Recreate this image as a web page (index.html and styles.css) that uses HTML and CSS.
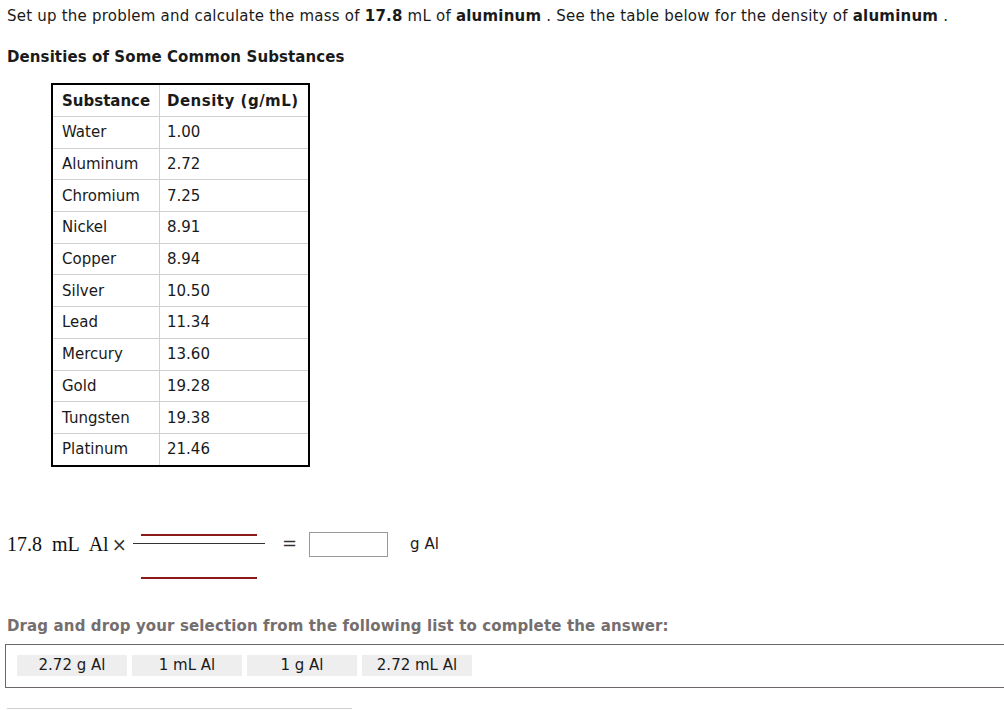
FILE: index.html
```html
<!DOCTYPE html>
<html>
<head>
<meta charset="utf-8">
<link rel="stylesheet" href="styles.css">
</head>
<body>
<p class="prompt">Set up the problem and calculate the mass of <b>17.8</b> mL of <b>aluminum</b> . See the table below for the density of <b>aluminum</b> .</p>
<h2 class="caption">Densities of Some Common Substances</h2>
<table class="dens">
  <thead><tr><th>Substance</th><th>Density (g/mL)</th></tr></thead>
  <tbody>
    <tr><td>Water</td><td>1.00</td></tr>
    <tr><td>Aluminum</td><td>2.72</td></tr>
    <tr><td>Chromium</td><td>7.25</td></tr>
    <tr><td>Nickel</td><td>8.91</td></tr>
    <tr><td>Copper</td><td>8.94</td></tr>
    <tr><td>Silver</td><td>10.50</td></tr>
    <tr><td>Lead</td><td>11.34</td></tr>
    <tr><td>Mercury</td><td>13.60</td></tr>
    <tr><td>Gold</td><td>19.28</td></tr>
    <tr><td>Tungsten</td><td>19.38</td></tr>
    <tr><td>Platinum</td><td>21.46</td></tr>
  </tbody>
</table>
<div class="equation">
  <span class="math">17.8&nbsp; mL&nbsp; Al<span class="times">×</span></span>
  <div class="fraction">
    <div class="slot"></div>
    <div class="bar"></div>
    <div class="slot bottom"></div>
  </div>
  <span class="equals">=</span>
  <div class="answer"></div>
  <span class="unit">g Al</span>
</div>
<p class="instr">Drag and drop your selection from the following list to complete the answer:</p>
<div class="pool">
  <span class="chip">2.72 g Al</span>
  <span class="chip">1 mL Al</span>
  <span class="chip">1 g Al</span>
  <span class="chip">2.72 mL Al</span>
</div>
<div class="foot"></div>
</body>
</html>
```
FILE: styles.css
```css
html, body {
  margin: 0;
  padding: 0;
  background: #fff;
}
body {
  font-family: "DejaVu Sans", Verdana, sans-serif;
  font-size: 15px;
  color: #1a1a1a;
  padding: 0 0 0 7px;
  overflow: hidden;
}
.prompt {
  margin: 0;
  padding-top: 6px;
  line-height: 20px;
  letter-spacing: 0.22px;
}
.prompt b { font-weight: bold; }
.caption {
  margin: 0;
  padding-top: 21px;
  font-size: 15px;
  line-height: 20px;
  font-weight: bold;
  letter-spacing: 0.1px;
}
.dens {
  margin: 16px 0 0 44px;
  border-collapse: collapse;
  border: 2px solid #000;
}
.dens th, .dens td {
  height: 30.7px;
  padding: 0 8px 0 9px;
  text-align: left;
  border-bottom: 1px solid #d0d0d0;
  vertical-align: middle;
  white-space: nowrap;
}
.dens th {
  height: 31px;
  font-weight: bold;
  padding: 0 6px 0 9px;
}
.dens th:last-child { letter-spacing: 0.5px; }
.dens td:first-child, .dens th:first-child {
  width: 89px;
  border-right: 1px solid #d0d0d0;
}
.dens td:last-child, .dens th:last-child {
  width: 133px;
  padding-left: 7px;
}
.dens tr:last-child td { border-bottom: none; }

.equation {
  display: flex;
  align-items: flex-start;
  margin-top: 59px;
  height: 60px;
}
.math {
  font-family: "Liberation Serif", "DejaVu Serif", serif;
  font-size: 20px;
  line-height: 24px;
  margin-top: 6px;
  width: 126px;
  white-space: nowrap;
  color: #111;
}
.times {
  margin-left: 3px;
  font-family: "DejaVu Serif", serif;
  font-size: 18px;
  font-weight: 300;
  color: #333;
}
.fraction {
  width: 132px;
  display: flex;
  flex-direction: column;
  align-items: center;
  padding-top: 8px;
}
.slot {
  width: 116px;
  height: 2px;
  background: #8b1a1a;
}
.bar {
  width: 132px;
  height: 1.5px;
  background: #333;
  margin-top: 7px;
}
.slot.bottom { margin-top: 33px; }
.equals {
  font-family: "DejaVu Serif", serif;
  font-size: 18px;
  line-height: 24px;
  margin: 6px 0 0 17px;
  color: #333;
}
.answer {
  width: 77px;
  height: 23px;
  border: 1px solid #999;
  margin: 6px 0 0 12px;
}
.unit {
  line-height: 24px;
  margin: 6px 0 0 22px;
  font-size: 15px;
}
.instr {
  margin: 30px 0 0 0;
  font-weight: bold;
  color: #756e6e;
  line-height: 20px;
  letter-spacing: 0.13px;
}
.pool {
  margin: 8px 0 0 -2px;
  border: 1px solid #6e6767;
  border-right: none;
  height: 42px;
  display: flex;
  align-items: center;
  gap: 5px;
  padding-left: 11px;
}
.chip {
  width: 110px;
  height: 21px;
  line-height: 21px;
  text-align: center;
  background: #eeeeee;
}
.foot {
  margin-top: 20px;
  width: 345px;
  height: 1px;
  background: #cfcfcf;
}
```
